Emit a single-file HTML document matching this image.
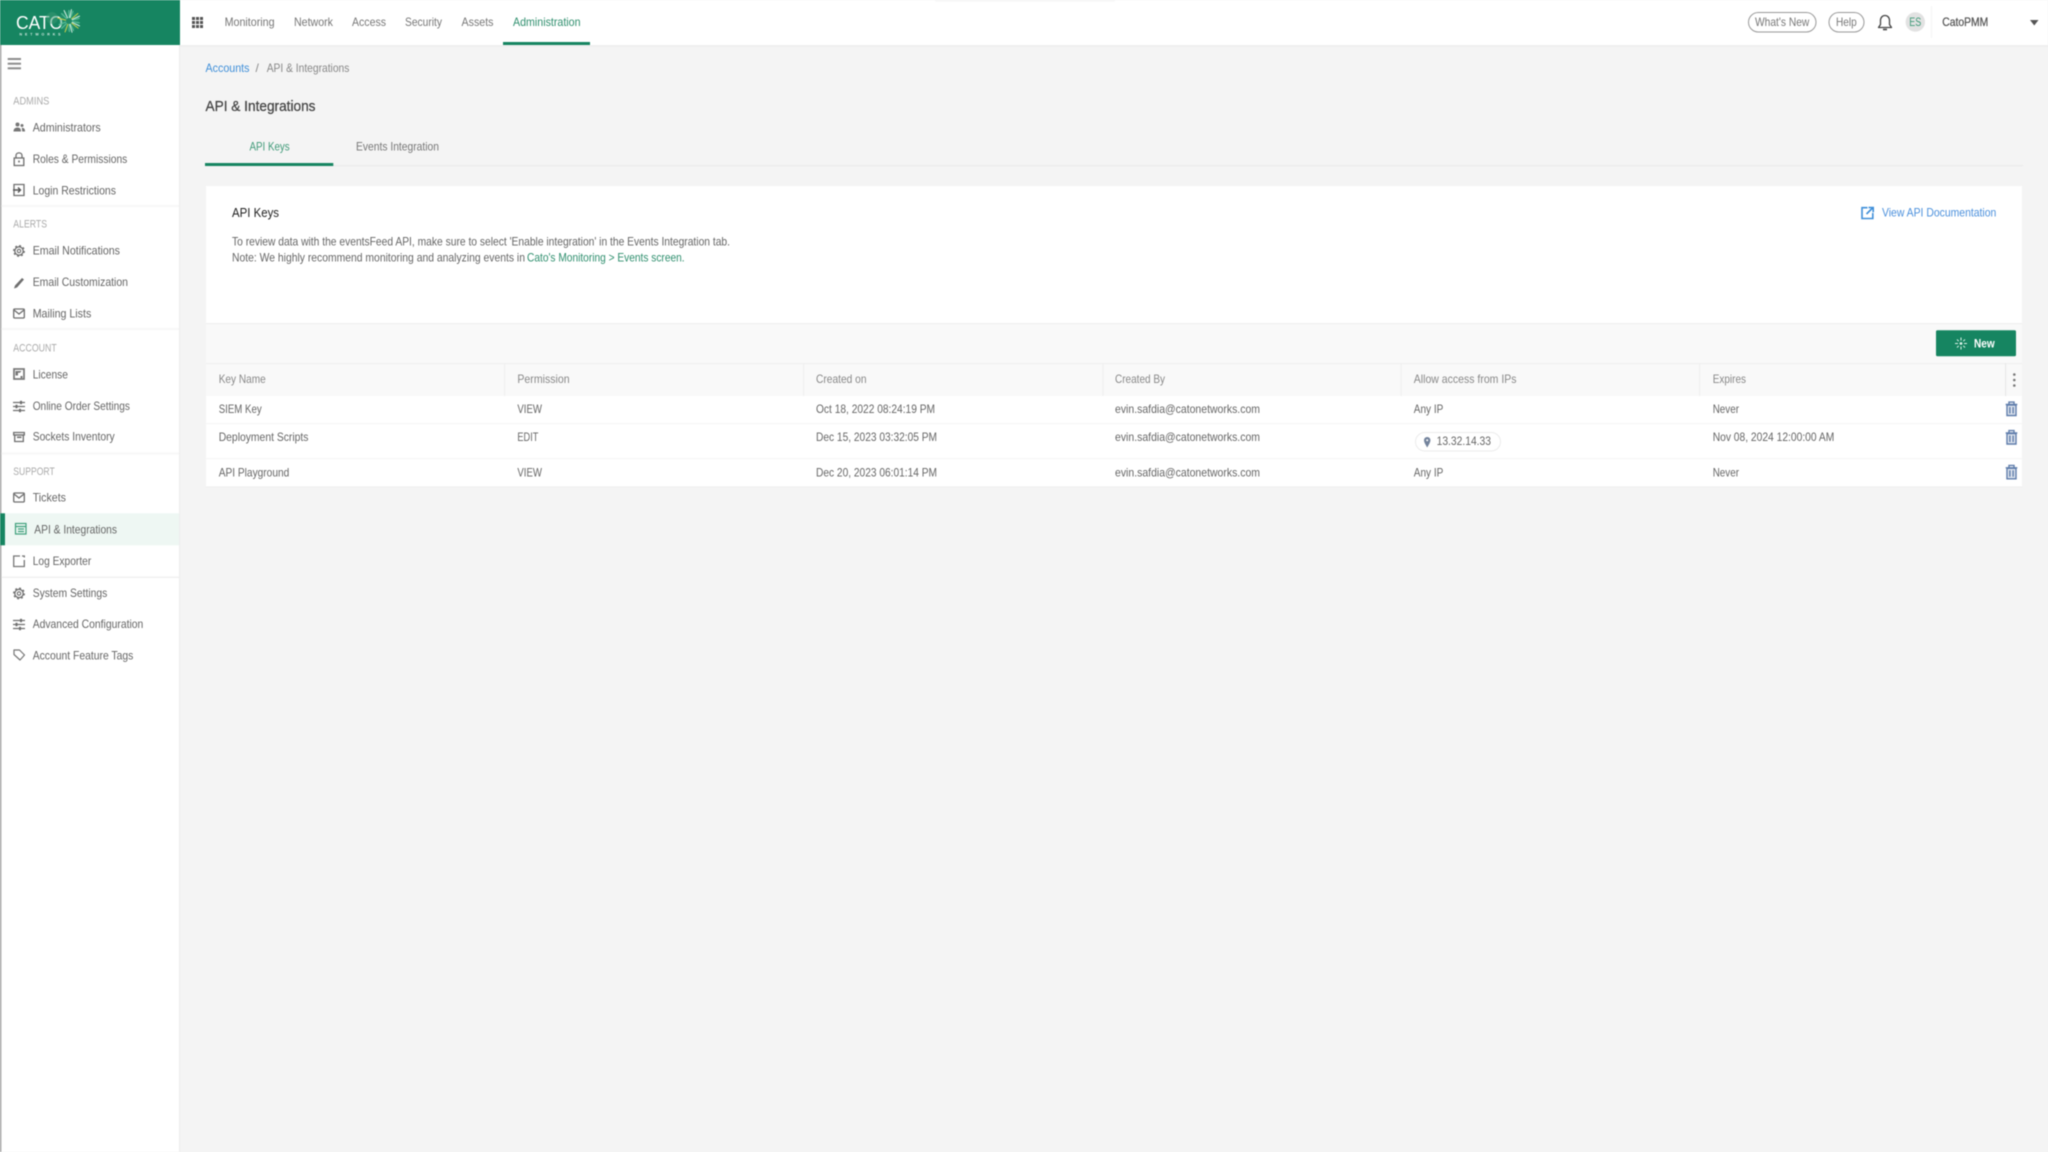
<!DOCTYPE html>
<html lang="en">
<head>
<meta charset="utf-8">
<title>API &amp; Integrations</title>
<style>
html,body{margin:0;padding:0;width:2048px;height:1152px;overflow:hidden;background:#f4f4f4}
svg{display:block;position:absolute;left:0;top:0;filter:blur(.45px)}
text{font-family:"Liberation Sans",sans-serif;font-size:12px;fill:#666}
.lab{fill:#aaa;font-size:11px}
.h{fill:#888}
.ic{fill:none;stroke:#6f6f6f;stroke-width:1.3}
.tr{fill:#dfe5ee;stroke:#5f7dab;stroke-width:1.4}
.ray{stroke-width:1.1;stroke:#5cc09a}
.ry{stroke-width:1;stroke:#c9cf4a}
.wt{stroke:#dff3ea;stroke-width:.9}
</style>
</head>
<body>
<svg width="2048" height="1152" viewBox="0 0 2048 1152" xmlns="http://www.w3.org/2000/svg">
<defs>
<linearGradient id="sh" x1="0" y1="0" x2="0" y2="1"><stop offset="0" stop-color="#000" stop-opacity=".035"/><stop offset="1" stop-color="#000" stop-opacity="0"/></linearGradient>
<g id="trash"><path class="tr" d="M-4.5 -3.5H4.5V7H-4.5Z"/><path d="M-5.8 -4H5.8M-2.5 -4.2V-6.4H2.5V-4.2M-1.6 -1.5V5M1.6 -1.5V5" fill="none" stroke="#5f7dab" stroke-width="1.4"/></g>
<g id="sliders"><path d="M0 2.5H12M0 6.5H12M0 10.5H12" fill="none" stroke="#6f6f6f" stroke-width="1.2"/><rect x="7" y="0.8" width="2" height="3.4" fill="#6f6f6f"/><rect x="2.5" y="4.8" width="2" height="3.4" fill="#6f6f6f"/><rect x="6" y="8.8" width="2" height="3.4" fill="#6f6f6f"/></g>
<g id="gear"><circle cx="6" cy="6" r="4.2" fill="none" stroke="#6f6f6f" stroke-width="1.3"/><circle cx="6" cy="6" r="1.7" fill="none" stroke="#6f6f6f" stroke-width="1.1"/><circle cx="6" cy="6" r="5.3" fill="none" stroke="#6f6f6f" stroke-width="1.3" stroke-dasharray="1.9 2.26"/></g>
</defs>

<!-- backgrounds -->
<rect width="2048" height="1152" fill="#f4f4f4"/>
<rect x="0" y="45" width="179" height="1107" fill="#fff"/>
<rect x="179" y="45" width="1" height="1107" fill="#ededed"/>
<rect x="0" y="45" width="1.3" height="1107" fill="#9a9a9a"/>

<!-- top bar -->
<rect x="180" y="0" width="1868" height="45" fill="#fff"/>
<rect x="180" y="45" width="1868" height="2" fill="#efefef"/>
<rect x="935" y="0" width="180" height="3" fill="url(#sh)"/>
<rect x="0" y="0" width="180" height="45" fill="#168561"/>

<!-- logo -->
<text x="16" y="29" textLength="47" lengthAdjust="spacingAndGlyphs" style="fill:#fff;font-size:18.5px">CATO</text>
<text x="19.5" y="35.5" textLength="41" style="fill:#dcefe7;font-size:3.5px;font-weight:bold">NETWORKS</text>
<g>
<circle cx="52" cy="18" r="6" fill="#3c9a74" opacity=".5"/>
<circle cx="69" cy="21" r="10" fill="#2f9a74" opacity=".45"/>
<line class="ray" x1="69" y1="18" x2="69" y2="10" transform="rotate(0 69 21)"/>
<line class="ray" x1="69" y1="18" x2="69" y2="10" transform="rotate(22 69 21)"/>
<line class="ry" x1="69" y1="18" x2="69" y2="9" transform="rotate(50 69 21)"/>
<line class="ray" x1="69" y1="18" x2="69" y2="10" transform="rotate(75 69 21)"/>
<line class="ray" x1="69" y1="18" x2="69" y2="10" transform="rotate(100 69 21)"/>
<line class="ry" x1="69" y1="18" x2="69" y2="9" transform="rotate(128 69 21)"/>
<line class="ray" x1="69" y1="18" x2="69" y2="10" transform="rotate(155 69 21)"/>
<line class="ray" x1="69" y1="18" x2="69" y2="10" transform="rotate(178 69 21)"/>
<line class="ry" x1="69" y1="18" x2="69" y2="9" transform="rotate(200 69 21)"/>
<line class="ray" x1="69" y1="18" x2="69" y2="10" transform="rotate(225 69 21)"/>
<line class="ray" x1="69" y1="18" x2="69" y2="10" transform="rotate(250 69 21)"/>
<line class="ry" x1="69" y1="18" x2="69" y2="9" transform="rotate(285 69 21)"/>
<line class="ray" x1="69" y1="18" x2="69" y2="10" transform="rotate(315 69 21)"/>
<line class="wt" x1="69" y1="18" x2="69" y2="9" transform="rotate(12 69 21)"/>
<line class="wt" x1="69" y1="18" x2="69" y2="9" transform="rotate(65 69 21)"/>
<line class="wt" x1="69" y1="18" x2="69" y2="9" transform="rotate(115 69 21)"/>
<line class="wt" x1="69" y1="18" x2="69" y2="9" transform="rotate(165 69 21)"/>
<line class="wt" x1="69" y1="18" x2="69" y2="9" transform="rotate(335 69 21)"/>
<circle cx="69" cy="21" r="3" fill="#1f8a66"/>
</g>

<!-- grid icon -->
<g fill="#555">
<rect x="192" y="17" width="3" height="3"/><rect x="196" y="17" width="3" height="3"/><rect x="200" y="17" width="3" height="3"/>
<rect x="192" y="21" width="3" height="3"/><rect x="196" y="21" width="3" height="3"/><rect x="200" y="21" width="3" height="3"/>
<rect x="192" y="25" width="3" height="3"/><rect x="196" y="25" width="3" height="3"/><rect x="200" y="25" width="3" height="3"/>
</g>

<!-- nav -->
<text x="224.6" y="26" textLength="50" lengthAdjust="spacingAndGlyphs" style="fill:#777">Monitoring</text>
<text x="294" y="26" textLength="39" lengthAdjust="spacingAndGlyphs" style="fill:#777">Network</text>
<text x="352" y="26" textLength="34" lengthAdjust="spacingAndGlyphs" style="fill:#777">Access</text>
<text x="405" y="26" textLength="37" lengthAdjust="spacingAndGlyphs" style="fill:#777">Security</text>
<text x="461.5" y="26" textLength="32" lengthAdjust="spacingAndGlyphs" style="fill:#777">Assets</text>
<text x="513" y="26" textLength="67.5" lengthAdjust="spacingAndGlyphs" style="fill:#2f8f6e">Administration</text>
<rect x="503" y="42" width="87" height="3" fill="#168561"/>

<!-- top right -->
<rect x="1748.5" y="12.5" width="67.5" height="19.5" rx="9.75" fill="#fff" stroke="#999"/>
<text x="1755" y="26" textLength="54.3" lengthAdjust="spacingAndGlyphs" style="fill:#777">What's New</text>
<rect x="1829" y="12.5" width="35" height="19.5" rx="9.75" fill="#fff" stroke="#999"/>
<text x="1836" y="26" textLength="20.7" lengthAdjust="spacingAndGlyphs" style="fill:#777">Help</text>
<path d="M1878.5 27.5H1891.5L1889.5 24.5V20.5C1889.5 17.5 1887.5 15.5 1885 15.5C1882.5 15.5 1880.5 17.5 1880.5 20.5V24.5Z" fill="none" stroke="#444" stroke-width="1.3" stroke-linejoin="round"/>
<path d="M1883 29.5H1887" stroke="#444" stroke-width="1.6" fill="none"/>
<circle cx="1915.3" cy="22" r="9.7" fill="#e2e2e2"/>
<text x="1909.3" y="26" textLength="12" lengthAdjust="spacingAndGlyphs" style="fill:#3f9a78">ES</text>
<rect x="1931" y="6" width="1" height="32" fill="#f4f4f4"/>
<text x="1942.3" y="26" textLength="46" lengthAdjust="spacingAndGlyphs" style="fill:#555;stroke:#555;stroke-width:.25">CatoPMM</text>
<path d="M2030 20H2038.5L2034.25 25.5Z" fill="#555"/>

<!-- sidebar -->
<rect x="7.7" y="58" width="13.3" height="2" fill="#8c8c8c"/>
<rect x="7.7" y="62.7" width="13.3" height="2" fill="#8c8c8c"/>
<rect x="7.7" y="67.3" width="13.3" height="2" fill="#8c8c8c"/>

<text class="lab" x="13.3" y="104.5" textLength="36" lengthAdjust="spacingAndGlyphs">ADMINS</text>
<text x="32.7" y="131.3" textLength="68" lengthAdjust="spacingAndGlyphs">Administrators</text>
<text x="32.7" y="163" textLength="94.6" lengthAdjust="spacingAndGlyphs">Roles &amp; Permissions</text>
<text x="32.7" y="194.3" textLength="83.3" lengthAdjust="spacingAndGlyphs">Login Restrictions</text>
<rect x="1.3" y="205" width="177.7" height="2" fill="#f7f7f7"/>
<text class="lab" x="13.3" y="227.5" textLength="33.7" lengthAdjust="spacingAndGlyphs">ALERTS</text>
<text x="32.7" y="254.7" textLength="87.3" lengthAdjust="spacingAndGlyphs">Email Notifications</text>
<text x="32.7" y="286" textLength="95.3" lengthAdjust="spacingAndGlyphs">Email Customization</text>
<text x="32.7" y="317.7" textLength="58.6" lengthAdjust="spacingAndGlyphs">Mailing Lists</text>
<rect x="1.3" y="328" width="177.7" height="2" fill="#f7f7f7"/>
<text class="lab" x="13.3" y="351.5" textLength="43.4" lengthAdjust="spacingAndGlyphs">ACCOUNT</text>
<text x="32.7" y="378.3" textLength="35.3" lengthAdjust="spacingAndGlyphs">License</text>
<text x="32.7" y="410" textLength="97.3" lengthAdjust="spacingAndGlyphs">Online Order Settings</text>
<text x="32.7" y="440.7" textLength="82" lengthAdjust="spacingAndGlyphs">Sockets Inventory</text>
<rect x="1.3" y="452.5" width="177.7" height="2" fill="#f7f7f7"/>
<text class="lab" x="13.3" y="474.8" textLength="41.4" lengthAdjust="spacingAndGlyphs">SUPPORT</text>
<text x="32.7" y="501.3" textLength="33.3" lengthAdjust="spacingAndGlyphs">Tickets</text>
<rect x="1.3" y="513.3" width="177.7" height="32" fill="#eef7f3"/>
<rect x="0" y="513.3" width="5" height="32" fill="#168561"/>
<text x="34.3" y="533.3" textLength="82.7" lengthAdjust="spacingAndGlyphs">API &amp; Integrations</text>
<text x="32.7" y="565" textLength="58.6" lengthAdjust="spacingAndGlyphs">Log Exporter</text>
<rect x="1.3" y="576.7" width="177.7" height="1.3" fill="#efefef"/>
<text x="32.7" y="597" textLength="74.6" lengthAdjust="spacingAndGlyphs">System Settings</text>
<text x="32.7" y="628" textLength="110.6" lengthAdjust="spacingAndGlyphs">Advanced Configuration</text>
<text x="32.7" y="659.3" textLength="100.6" lengthAdjust="spacingAndGlyphs">Account Feature Tags</text>

<!-- sidebar icons -->
<g fill="#777"><circle cx="17.5" cy="124.5" r="2"/><path d="M13.5 131.5C13.5 128.5 15.5 127.5 17.5 127.5C19.5 127.5 21 128.5 21 131.5Z"/><circle cx="22" cy="125.5" r="1.5"/><path d="M21.8 127.8C24 127.8 25 129 25 131.5H22.2Z"/></g>
<g class="ic"><rect x="14.2" y="158" width="9.6" height="7.5"/><path d="M16 158V155.5C16 152 22 152 22 155.5V158"/><path d="M19 160.5V162.5" stroke-width="1.5"/></g>
<g class="ic"><path d="M14 184.5H24V195.5H14Z"/><path d="M13 190H20M18 187.5L20.5 190L18 192.5" stroke="#555" stroke-width="1.4"/></g>
<use href="#gear" x="13" y="245"/>
<path d="M14 288.5L15 285.5L22 278L24 279.5L17 287.5Z" fill="#6f6f6f"/>
<g class="ic"><rect x="13.7" y="309" width="10.6" height="9" rx="1"/><path d="M14 310L19 314L24 310"/></g>
<rect x="14" y="369" width="10" height="10" fill="none" stroke="#777" stroke-width="1.7"/><path d="M15.5 375.5V371H21.5L20 372.8H18V375.5Z" fill="#777"/><rect x="20.5" y="376" width="2" height="2" fill="#777"/>
<use href="#sliders" x="13" y="400"/>
<g class="ic"><path d="M13.7 432.5H24.3V435H13.7Z"/><path d="M14.7 435H23.3V441.5H14.7Z"/></g><rect x="17" y="436.5" width="4.5" height="1.6" fill="#777"/>
<g class="ic"><rect x="13.7" y="493" width="10.6" height="9" rx="1"/><path d="M14 494L19 498L24 494"/></g>
<g fill="none" stroke="#3fa07c" stroke-width="1.2"><rect x="15.5" y="523.5" width="10.5" height="10.5"/><path d="M15.5 526.5H26M18 529H24M18 531.5H24"/></g>
<path d="M20 556H13.7V566.5H24.3V560M22 556H24.3V557.5" fill="none" stroke="#777" stroke-width="1.3"/>
<use href="#gear" x="13" y="587.5"/>
<use href="#sliders" x="13" y="618"/>
<path d="M14 650H19.5L24.5 655L20 660L14 654.5Z" fill="none" stroke="#777" stroke-width="1.2" stroke-linejoin="round"/>

<!-- breadcrumb -->
<text x="205.5" y="72" textLength="44" lengthAdjust="spacingAndGlyphs" style="fill:#3f8fd9">Accounts</text>
<text x="255.5" y="72" style="fill:#888">/</text>
<text x="266.7" y="72" textLength="82.7" lengthAdjust="spacingAndGlyphs" style="fill:#888">API &amp; Integrations</text>
<text x="205.5" y="111" textLength="110" lengthAdjust="spacingAndGlyphs" style="fill:#444;font-size:15px;stroke:#444;stroke-width:.25">API &amp; Integrations</text>

<!-- tabs -->
<rect x="205" y="165" width="1818" height="1.3" fill="#ebebeb"/>
<text x="249.5" y="150.5" textLength="40.2" lengthAdjust="spacingAndGlyphs" style="fill:#3f9a78">API Keys</text>
<text x="356" y="150.5" textLength="83" lengthAdjust="spacingAndGlyphs" style="fill:#777">Events Integration</text>
<rect x="205" y="163" width="128.3" height="3" fill="#168561"/>

<!-- card -->
<rect x="206" y="186" width="1816" height="137" fill="#fff"/>
<text x="232" y="217" textLength="47" lengthAdjust="spacingAndGlyphs" style="fill:#222;font-size:13px">API Keys</text>
<text x="232" y="245.5" textLength="498" lengthAdjust="spacingAndGlyphs">To review data with the eventsFeed API, make sure to select 'Enable integration' in the Events Integration tab.</text>
<text x="232" y="261.7" textLength="293" lengthAdjust="spacingAndGlyphs">Note: We highly recommend monitoring and analyzing events in</text>
<text x="527" y="261.7" textLength="157.6" lengthAdjust="spacingAndGlyphs" style="fill:#2f8f6e">Cato's Monitoring &gt; Events screen.</text>
<path d="M1867.5 207.7H1862V218.5H1872.8V213M1866.5 214L1872.5 208M1868.5 207.5H1873.2V212.2" fill="none" stroke="#3f8fd9" stroke-width="1.6"/>
<text x="1882" y="216.7" textLength="114.3" lengthAdjust="spacingAndGlyphs" style="fill:#4b90dc">View API Documentation</text>

<!-- toolbar -->
<rect x="206" y="323" width="1816" height="73" fill="#f9f9f9"/>
<rect x="206" y="323" width="1816" height="1.2" fill="#f0f0f0"/>
<rect x="206" y="363" width="1816" height="1.2" fill="#f0f0f0"/>
<rect x="1936" y="330.3" width="80" height="26" rx="1.5" fill="#168561"/>
<g stroke="#dff3ea" stroke-width="1" fill="none"><path d="M1961 337.5V340.5M1961 346.5V349.5M1955 343.5H1958M1964 343.5H1967M1957 339.5L1958.7 341.2M1963.3 345.8L1965 347.5M1957 347.5L1958.7 345.8M1963.3 341.2L1965 339.5"/></g>
<circle cx="1961" cy="343.5" r="1.4" fill="#dff3ea"/>
<text x="1974" y="347.5" textLength="20.7" lengthAdjust="spacingAndGlyphs" style="fill:#fff;font-weight:bold">New</text>

<!-- table header -->
<rect x="504" y="363" width="1.2" height="33" fill="#f0f0f0"/>
<rect x="803" y="363" width="1.2" height="33" fill="#f0f0f0"/>
<rect x="1102.3" y="363" width="1.2" height="33" fill="#f0f0f0"/>
<rect x="1400.6" y="363" width="1.2" height="33" fill="#f0f0f0"/>
<rect x="1699" y="363" width="1.2" height="33" fill="#f0f0f0"/>
<rect x="2005" y="363" width="1.2" height="33" fill="#e8e8e8"/>
<text class="h" x="218.7" y="382.8" textLength="47" lengthAdjust="spacingAndGlyphs">Key Name</text>
<text class="h" x="517.4" y="382.8" textLength="52.2" lengthAdjust="spacingAndGlyphs">Permission</text>
<text class="h" x="816" y="382.8" textLength="50.5" lengthAdjust="spacingAndGlyphs">Created on</text>
<text class="h" x="1115" y="382.8" textLength="50" lengthAdjust="spacingAndGlyphs">Created By</text>
<text class="h" x="1413.8" y="382.8" textLength="102.7" lengthAdjust="spacingAndGlyphs">Allow access from IPs</text>
<text class="h" x="1712.7" y="382.8" textLength="33.3" lengthAdjust="spacingAndGlyphs">Expires</text>
<circle cx="2014.3" cy="374.5" r="1.3" fill="#777"/><circle cx="2014.3" cy="380" r="1.3" fill="#777"/><circle cx="2014.3" cy="385.5" r="1.3" fill="#777"/>

<!-- rows -->
<rect x="206" y="396" width="1816" height="91" fill="#fff"/>
<rect x="206" y="423" width="1816" height="1.2" fill="#f6f6f6"/>
<rect x="206" y="458" width="1816" height="1.2" fill="#f6f6f6"/>
<rect x="206" y="486.5" width="1816" height="1" fill="#eeeeee"/>

<text x="218.7" y="412.8" textLength="43" lengthAdjust="spacingAndGlyphs">SIEM Key</text>
<text x="517.4" y="412.8" textLength="24.6" lengthAdjust="spacingAndGlyphs">VIEW</text>
<text x="816" y="412.8" textLength="119" lengthAdjust="spacingAndGlyphs">Oct 18, 2022 08:24:19 PM</text>
<text x="1115" y="412.8" textLength="145" lengthAdjust="spacingAndGlyphs">evin.safdia@catonetworks.com</text>
<text x="1413.8" y="412.8" textLength="29.5" lengthAdjust="spacingAndGlyphs">Any IP</text>
<text x="1712.7" y="412.8" textLength="26.3" lengthAdjust="spacingAndGlyphs">Never</text>

<text x="218.7" y="441" textLength="89.8" lengthAdjust="spacingAndGlyphs">Deployment Scripts</text>
<text x="517.4" y="441" textLength="21" lengthAdjust="spacingAndGlyphs">EDIT</text>
<text x="816" y="441" textLength="121" lengthAdjust="spacingAndGlyphs">Dec 15, 2023 03:32:05 PM</text>
<text x="1115" y="441" textLength="145" lengthAdjust="spacingAndGlyphs">evin.safdia@catonetworks.com</text>
<rect x="1415.5" y="432.5" width="85" height="18.5" rx="9.25" fill="#fff" stroke="#ececec"/>
<path d="M1427.2 447.5C1425.3 444 1424 442.2 1424 440.2A3.2 3.2 0 0 1 1430.4 440.2C1430.4 442.2 1429.1 444 1427.2 447.5Z" fill="#73839c"/>
<circle cx="1427.2" cy="440.2" r="1" fill="#fff"/>
<text x="1436.6" y="445" textLength="54.4" lengthAdjust="spacingAndGlyphs">13.32.14.33</text>
<text x="1712.7" y="441" textLength="121.6" lengthAdjust="spacingAndGlyphs">Nov 08, 2024 12:00:00 AM</text>

<text x="218.7" y="476.5" textLength="70.6" lengthAdjust="spacingAndGlyphs">API Playground</text>
<text x="517.4" y="476.5" textLength="24.6" lengthAdjust="spacingAndGlyphs">VIEW</text>
<text x="816" y="476.5" textLength="121" lengthAdjust="spacingAndGlyphs">Dec 20, 2023 06:01:14 PM</text>
<text x="1115" y="476.5" textLength="145" lengthAdjust="spacingAndGlyphs">evin.safdia@catonetworks.com</text>
<text x="1413.8" y="476.5" textLength="29.5" lengthAdjust="spacingAndGlyphs">Any IP</text>
<text x="1712.7" y="476.5" textLength="26.3" lengthAdjust="spacingAndGlyphs">Never</text>

<use href="#trash" x="2011.5" y="408.5"/>
<use href="#trash" x="2011.5" y="437"/>
<use href="#trash" x="2011.5" y="471.8"/>
</svg>
</body>
</html>
